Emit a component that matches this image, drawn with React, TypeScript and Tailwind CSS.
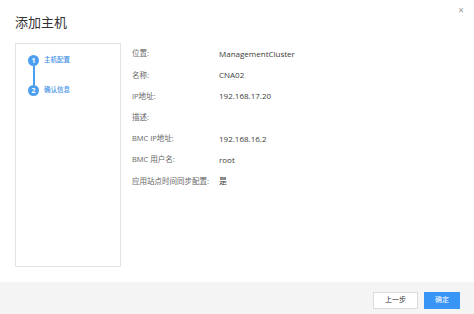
import React from "react";

const rows: [string, string][] = [
  ["位置:", "ManagementCluster"],
  ["名称:", "CNA02"],
  ["IP地址:", "192.168.17.20"],
  ["描述:", ""],
  ["BMC IP地址:", "192.168.16.2"],
  ["BMC 用户名:", "root"],
  ["应用站点时间同步配置:", "是"],
];

export default function App() {
  return (
    <div
      className="w-[474px] h-[314px] bg-white flex flex-col overflow-hidden relative"
      style={{ fontFamily: '"Open Sans", "Noto Sans CJK SC", sans-serif' }}
    >
      <span className="absolute right-[10px] top-[5px] text-[10px] leading-none text-[#9a9a9a]">×</span>
      <div className="h-[43px] pl-[15px] pt-[12px]">
        <div className="text-[13px] leading-[20px] text-[#333]">添加主机</div>
      </div>
      <div className="flex flex-1 pl-[15px]">
        <div className="w-[106px] h-[224px] border border-[#e3e3e3] pl-[12px] pt-[11px] flex flex-col">
          <div className="flex items-center gap-[5px] h-[11px]">
            <div className="w-[11px] h-[11px] rounded-full bg-[#4c9ff0] text-white text-[7px] font-bold leading-none flex items-center justify-center">1</div>
            <span className="text-[6.5px] leading-none text-[#3d8fe6] font-medium">主机配置</span>
          </div>
          <div className="w-[2px] h-[19px] bg-[#4c9ff0] ml-[4.5px]"></div>
          <div className="flex items-center gap-[5px] h-[11px]">
            <div className="w-[11px] h-[11px] rounded-full bg-[#4c9ff0] text-white text-[7px] font-bold leading-none flex items-center justify-center">2</div>
            <span className="text-[6.5px] leading-none text-[#3d8fe6] font-medium">确认信息</span>
          </div>
        </div>
        <div className="ml-[11px] flex flex-col pt-[0.5px]">
          {rows.map(([k, v]) => (
            <div key={k} className="flex items-center h-[21.2px]">
              <span className="w-[87px] text-[7.5px] text-[#666] whitespace-nowrap">{k}</span>
              <span className="text-[8px] text-[#3a3a3a] whitespace-nowrap">{v}</span>
            </div>
          ))}
        </div>
      </div>
      <div className="h-[32px] bg-[#f4f4f4] flex justify-end items-start pt-[10px] pr-[14px] gap-[6px]">
        <div className="w-[45px] h-[17px] bg-white border border-[#dcdcdc] flex items-center justify-center text-[7px] text-[#333]">上一步</div>
        <div className="w-[36px] h-[17px] bg-[#3894f5] flex items-center justify-center text-[7px] text-white">确定</div>
      </div>
    </div>
  );
}
